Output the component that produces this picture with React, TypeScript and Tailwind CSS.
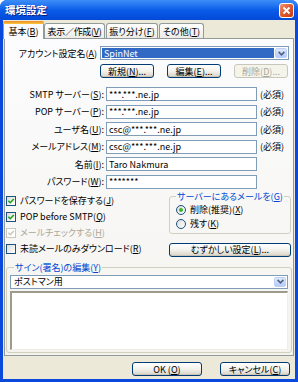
import type { ReactNode } from "react";

const font = "font-['Noto_Sans_CJK_JP','Noto_Sans',sans-serif] [font-feature-settings:'palt']";

function Acc({ label, k, tail = "" }: { label: string; k: string; tail?: string }) {
	return (
		<>
			{label}(<u>{k}</u>){tail}
		</>
	);
}

function XpButton({ children, className = "", disabled = false }: { children: ReactNode; className?: string; disabled?: boolean }) {
	return (
		<div
			className={`${className} h-[14px] rounded-[3px] border flex items-center justify-center leading-none ${
				disabled
					? "border-[#C9C7BA] bg-[#F5F4EA] text-[#ACA899]"
					: "border-[#003C74] bg-linear-to-b from-white via-[#F3F2EC] to-[#D9D3C7] text-black shadow-[inset_0_-1px_0_#CDC6B8]"
			}`}
		>
			{children}
		</div>
	);
}

function Arrow() {
	return (
		<div className="w-[12px] ml-[1px] rounded-[2px] bg-linear-to-b from-[#E0E9FD] to-[#B6CBF8] border border-[#BCCFF8] flex items-center justify-center">
			<svg width="7" height="5" viewBox="0 0 7 5">
				<path d="M0.6 0.9 L3.5 3.8 L6.4 0.9" stroke="#4D6185" strokeWidth="1.6" fill="none" />
			</svg>
		</div>
	);
}

function Combo({ text, selected = false, className = "" }: { text: string; selected?: boolean; className?: string }) {
	return (
		<div className={`${className} h-[14px] border border-[#7F9DB9] bg-white flex items-stretch p-[1px]`}>
			<div className={`flex-1 flex items-center px-[2px] leading-none ${selected ? "bg-[#316AC5] text-white" : "text-black"}`}>{text}</div>
			<Arrow />
		</div>
	);
}

function Field({ label, value, required }: { label: ReactNode; value: string; required?: boolean }) {
	return (
		<div className="flex items-center h-[14px]">
			<div className="w-[99px] text-right leading-none">{label}</div>
			<div className="ml-[2px] w-[151px] h-[14px] border border-[#7F9DB9] bg-white px-[2px] flex items-center leading-none">{value}</div>
			{required && <div className="ml-[3px] leading-none">(必須)</div>}
		</div>
	);
}

function Check({ checked, disabled, children }: { checked?: boolean; disabled?: boolean; children: ReactNode }) {
	return (
		<div className={`flex items-center h-[16px] ${disabled ? "text-[#ACA899]" : "text-black"}`}>
			<div
				className={`w-[10px] h-[10px] border flex items-center justify-center ${
					disabled ? "border-[#CAC8BB] bg-white" : "border-[#1C5180] bg-linear-to-br from-[#DCDCD7] to-white"
				}`}
			>
				{checked && (
					<svg width="8" height="8" viewBox="0 0 8 8">
						<path d="M1.3 3.8 L3.2 5.7 L6.8 2" stroke={disabled ? "#CAC8BB" : "#21A121"} strokeWidth="1.6" fill="none" />
					</svg>
				)}
			</div>
			<span className="ml-[4px] leading-none">{children}</span>
		</div>
	);
}

function Radio({ checked, children }: { checked?: boolean; children: ReactNode }) {
	return (
		<div className="flex items-center h-[14px]">
			<div className="w-[10px] h-[10px] rounded-full border border-[#1C5180] bg-linear-to-br from-[#DCDCD7] to-white flex items-center justify-center">
				{checked && <div className="w-[4px] h-[4px] rounded-full bg-[#3DB42E]" />}
			</div>
			<span className="ml-[4px] leading-none">{children}</span>
		</div>
	);
}

export default function App() {
	return (
		<div className={`${font} w-[298px] h-[382px] bg-[#0A49DC] rounded-t-[7px] flex flex-col text-[9px] text-black whitespace-nowrap overflow-hidden`}>
			<div className="h-[20px] shrink-0 bg-linear-to-b from-[#3D8EF8] via-[#0A5CE9] to-[#0449D8] flex items-center justify-between pl-[5px] pr-[4px]">
				<span className="text-white font-bold text-[10.5px] leading-none [text-shadow:1px_1px_0_#0A1E80]">環境設定</span>
				<div className="w-[15px] h-[15px] rounded-[3px] border border-white bg-linear-to-br from-[#F0926F] via-[#E0592F] to-[#C43B16] flex items-center justify-center">
					<svg width="9" height="9" viewBox="0 0 9 9">
						<path d="M1.5 1.5 L7.5 7.5 M7.5 1.5 L1.5 7.5" stroke="white" strokeWidth="1.8" />
					</svg>
				</div>
			</div>

			<div className="mx-[3px] mb-[3px] flex-1 bg-[#ECE9D8] flex flex-col">
				{/* tabs */}
				<div className="mt-[1px] h-[17px] flex items-end">
					<div className="relative z-10 -mb-px w-[41px] h-[18px] rounded-t-[3px] border-x border-[#919B9C] bg-[#FCFCFE] flex flex-col">
						<div className="h-[3px] rounded-t-[2px] bg-linear-to-b from-[#E68B2C] to-[#FFC73C] -mx-px" />
						<div className="flex-1 flex items-center justify-center leading-none">
							<Acc label="基本" k="B" />
						</div>
					</div>
					<div className="w-[61px] h-[15px] rounded-t-[3px] border border-b-0 border-[#919B9C] bg-linear-to-b from-white to-[#ECEBE6] flex items-center justify-center leading-none tracking-[-0.3px]">
						<Acc label="表示／作成" k="V" />
					</div>
					<div className="ml-[1px] w-[52px] h-[15px] rounded-t-[3px] border border-b-0 border-[#919B9C] bg-linear-to-b from-white to-[#ECEBE6] flex items-center justify-center leading-none">
						<Acc label="振り分け" k="F" />
					</div>
					<div className="ml-[1px] w-[45px] h-[15px] rounded-t-[3px] border border-b-0 border-[#919B9C] bg-linear-to-b from-white to-[#ECEBE6] flex items-center justify-center leading-none">
						<Acc label="その他" k="T" />
					</div>
				</div>

				{/* panel */}
				<div className="ml-[1px] w-[290px] h-[318px] border border-[#919B9C] bg-linear-to-b from-[#FCFCFE] to-[#F4F3EE] flex flex-col">
					<div className="mt-[7px] flex items-center h-[14px]">
						<div className="w-[92px] text-right leading-none">
							<Acc label="アカウント設定名" k="A" />
						</div>
						<Combo className="ml-[3px] w-[189px]" text="SpinNet" selected />
					</div>

					<div className="mt-[4px] ml-[95px] flex gap-[13px]">
						<XpButton className="w-[54px]">
							<Acc label="新規" k="N" tail="..." />
						</XpButton>
						<XpButton className="w-[54px]">
							<Acc label="編集" k="E" tail="..." />
						</XpButton>
						<XpButton className="w-[54px]" disabled>
							<Acc label="削除" k="D" tail="..." />
						</XpButton>
					</div>

					<div className="mt-[9px] flex flex-col gap-[3.5px]">
						<Field label={<Acc label="SMTP サーバー" k="S" tail=":" />} value="***.***.ne.jp" required />
						<Field label={<Acc label="POP サーバー" k="P" tail=":" />} value="***.***.ne.jp" required />
						<Field label={<Acc label="ユーザ名" k="U" tail=":" />} value="csc@***.***.ne.jp" required />
						<Field label={<Acc label="メールアドレス" k="M" tail=":" />} value="csc@***.***.ne.jp" required />
						<Field label={<Acc label="名前" k="I" tail=":" />} value="Taro Nakmura" />
						<Field label={<Acc label="パスワード" k="W" tail=":" />} value="*******" />
					</div>

					<div className="mt-[2px] flex">
						<div className="w-[164px] pl-[1px] pt-[2px] flex flex-col">
							<Check checked>
								<Acc label="パスワードを保存する" k="J" />
							</Check>
							<Check checked>
								<Acc label="POP before SMTP" k="Q" />
							</Check>
							<Check checked disabled>
								<Acc label="メールチェックする" k="H" />
							</Check>
							<Check>
								<Acc label="未読メールのみダウンロード" k="R" />
							</Check>
						</div>
						<div className="w-[122px] flex flex-col">
							<fieldset className="border border-[#D0D0BF] rounded-[3px] px-[6px] pb-[2px] min-w-0">
								<legend className="px-[1px] leading-[12px] text-[#0046D5] whitespace-nowrap">
									<Acc label="サーバーにあるメールを" k="G" />
								</legend>
								<Radio checked>
									<Acc label="削除(推奨)" k="X" />
								</Radio>
								<Radio>
									<Acc label="残す" k="K" />
								</Radio>
							</fieldset>
							<XpButton className="mt-[9px] w-full">
								<Acc label="むずかしい設定" k="L" tail="..." />
							</XpButton>
						</div>
					</div>

					<fieldset className="mt-[5px] ml-[1px] w-[286px] border border-[#D0D0BF] rounded-[3px] px-[3px] pb-[2px]">
						<legend className="ml-[4px] px-[1px] leading-[12px] text-[#0046D5]">
							<Acc label="サイン(署名)の編集" k="Y" />
						</legend>
						<Combo className="mt-[1px] w-full" text="ポストマン用" />
						<div className="mt-[2px] h-[59px] bg-white border-t-2 border-l-2 border-t-[#9D9A8E] border-l-[#9D9A8E] border-r border-b border-r-[#F1EFE2] border-b-[#F1EFE2]" />
					</fieldset>
				</div>

				<div className="mt-[6px] pr-[5px] flex justify-end gap-[18px]">
					<XpButton className="w-[70px]">
						OK (<u>O</u>)
					</XpButton>
					<XpButton className="w-[70px]">
						<Acc label="キャンセル" k="C" />
					</XpButton>
				</div>
			</div>
		</div>
	);
}
